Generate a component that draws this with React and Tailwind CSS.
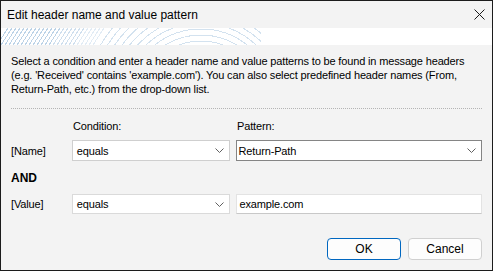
import React from "react";

const font = { fontFamily: '"Liberation Sans", Arial, sans-serif' };

function Chevron() {
  return (
    <svg width="9" height="5" viewBox="0 0 9 5" className="shrink-0">
      <path d="M0.5 0.5 L4.5 4.5 L8.5 0.5" fill="none" stroke="#606060" strokeWidth="1" />
    </svg>
  );
}

function hatch(from, to) {
  let d = "";
  for (let i = from; i < to; i++) {
    const x = i * 4 - 4;
    d += `M${x} 17 L${x + 11} 0 `;
  }
  return d;
}

function Banner() {
  let arcs = "";
  for (let i = 0; i < 12; i++) {
    const r = 50 + i * 6;
    arcs += `M${200 - r} 75 A${r} ${r} 0 0 1 ${200 + r} 75 `;
  }
  return (
    <div className="h-[17px] bg-white overflow-hidden shrink-0">
      <svg width="260" height="17" viewBox="0 0 260 17" className="block" shapeRendering="crispEdges">
        <path d={hatch(0, 14)} fill="none" stroke="#bcd3e7" strokeWidth="1" />
        <path d={hatch(14, 20)} fill="none" stroke="#cfdfee" strokeWidth="1" />
        <path d={hatch(20, 25)} fill="none" stroke="#e2ecf5" strokeWidth="1" />
        <path d={arcs} fill="none" stroke="#d3e2ef" strokeWidth="1" />
      </svg>
    </div>
  );
}

export default function App() {
  return (
    <div
      className="w-[493px] h-[271px] border border-[#1c1c1c] bg-[#f3f3f3] text-[#000] flex flex-col overflow-hidden"
      style={font}
    >
      <div className="h-[27px] flex items-center justify-between pl-[6px] pr-[7px] shrink-0">
        <span className="text-[12px]">Edit header name and value pattern</span>
        <svg width="11" height="11" viewBox="0 0 11 11">
          <path d="M0.5 0.5 L10.5 10.5 M10.5 0.5 L0.5 10.5" stroke="#1a1a1a" strokeWidth="1" />
        </svg>
      </div>
      <Banner />
      <div className="flex flex-col px-[10px] pt-[9px] text-[11px] leading-[14px] tracking-[-0.15px]">
        <p>
          Select a condition and enter a header name and value patterns to be found in message headers
          <br />
          (e.g. 'Received' contains 'example.com'). You can also select predefined header names (From,
          <br />
          Return-Path, etc.) from the drop-down list.
        </p>
        <div className="mt-[12px] border-t border-dotted border-[#b4b4b4]" />
        <div className="flex mt-[10px] h-[14px]">
          <span className="w-[62px]" />
          <span className="w-[164px]">Condition:</span>
          <span>Pattern:</span>
        </div>
        <div className="flex items-center mt-[7px]">
          <span className="w-[61px]">[Name]</span>
          <div className="w-[158px] h-[21px] bg-white border border-[#cfcfcf] flex items-center justify-between pl-[4px] pr-[5px]">
            <span>equals</span>
            <Chevron />
          </div>
          <div className="ml-[6px] w-[247px] h-[21px] bg-white border border-[#858585] flex items-center justify-between pl-[2px] pr-[5px]">
            <span>Return-Path</span>
            <Chevron />
          </div>
        </div>
        <div className="mt-[10px] text-[12px] leading-[14px] font-bold tracking-normal">AND</div>
        <div className="flex items-center mt-[9px]">
          <span className="w-[61px]">[Value]</span>
          <div className="w-[158px] h-[20px] bg-white border border-[#dadada] flex items-center justify-between pl-[4px] pr-[5px]">
            <span>equals</span>
            <Chevron />
          </div>
          <div className="ml-[6px] w-[247px] h-[20px] bg-white border border-[#e3e3e3] border-b-[#c8c8c8] flex items-center pl-[3px]">
            <span>example.com</span>
          </div>
        </div>
        <div className="flex justify-end gap-[7px] mt-[24px]">
          <button className="w-[74px] h-[22px] rounded-[4px] border border-[#0067c0] bg-[#fdfdfd] text-[12px] tracking-normal">
            OK
          </button>
          <button className="w-[74px] h-[22px] rounded-[4px] border border-[#d0d0d0] bg-[#fdfdfd] text-[12px] tracking-normal">
            Cancel
          </button>
        </div>
      </div>
    </div>
  );
}
